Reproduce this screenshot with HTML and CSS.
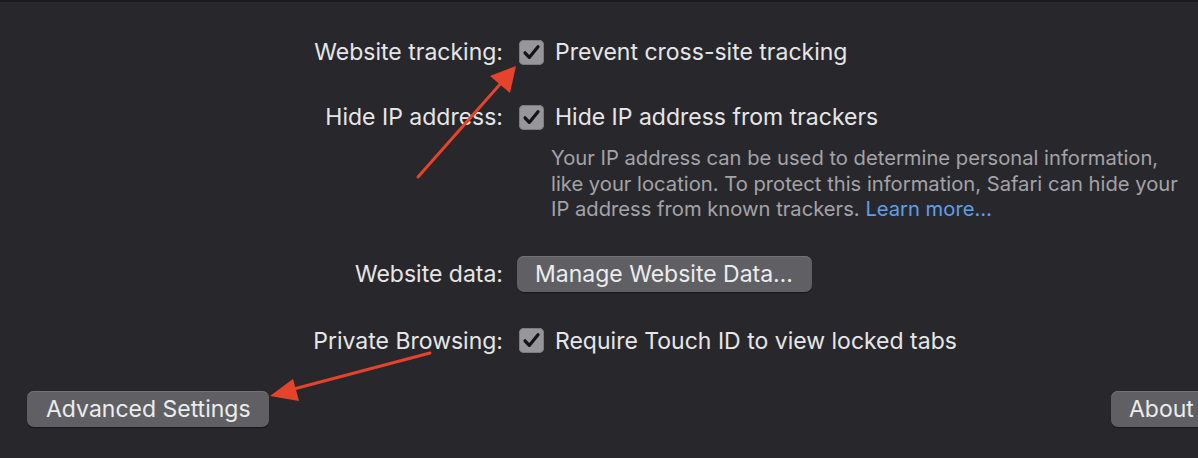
FILE: index.html
```html
<!DOCTYPE html>
<html>
<head>
<meta charset="utf-8">
<link rel="stylesheet" href="styles.css">
</head>
<body>
<div class="page">
  <div class="form">
    <div class="label r1">Website tracking:</div>
    <div class="field r1">
      <span class="check"><svg viewBox="0 0 25 25" width="25" height="25"><path d="M6 12.8 L10.3 17.4 L19 6.8" fill="none" stroke="#141416" stroke-width="3.2" stroke-linecap="round" stroke-linejoin="round"/></svg></span>
      <span class="text">Prevent cross-site tracking</span>
    </div>

    <div class="label r2">Hide IP address:</div>
    <div class="field r2">
      <span class="check"><svg viewBox="0 0 25 25" width="25" height="25"><path d="M6 12.8 L10.3 17.4 L19 6.8" fill="none" stroke="#141416" stroke-width="3.2" stroke-linecap="round" stroke-linejoin="round"/></svg></span>
      <span class="text">Hide IP address from trackers</span>
    </div>
    <div class="label"></div>
    <p class="desc">Your IP address can be used to determine personal information, like your location. To protect this information, Safari can hide your IP address from known trackers. <a class="link">Learn more…</a></p>

    <div class="label r3">Website data:</div>
    <div class="field r3">
      <span class="button manage">Manage Website Data…</span>
    </div>

    <div class="label r4">Private Browsing:</div>
    <div class="field r4">
      <span class="check"><svg viewBox="0 0 25 25" width="25" height="25"><path d="M6 12.8 L10.3 17.4 L19 6.8" fill="none" stroke="#141416" stroke-width="3.2" stroke-linecap="round" stroke-linejoin="round"/></svg></span>
      <span class="text">Require Touch ID to view locked tabs</span>
    </div>
  </div>

  <div class="bottom">
    <span class="button advanced">Advanced Settings</span>
    <span class="button about">About</span>
  </div>

  <svg class="arrows" width="1198" height="458" viewBox="0 0 1198 458">
    <line x1="418" y1="177" x2="502" y2="82" stroke="#e5432b" stroke-width="3" stroke-linecap="round"/>
    <polygon points="516,66 510,93 490,76" fill="#e5432b"/>
    <line x1="430" y1="353" x2="290" y2="390" stroke="#e5432b" stroke-width="3" stroke-linecap="round"/>
    <polygon points="270,396 293,379 299,401" fill="#e5432b"/>
  </svg>
</div>
</body>
</html>
```

FILE: styles.css
```css
html, body {
  margin: 0;
  padding: 0;
  background: #28282c;
  overflow: hidden;
}

.page {
  position: relative;
  width: 1198px;
  height: 458px;
  border-top: 2px solid #1a1a1c;
  box-sizing: border-box;
  font-family: Inter, "Noto Sans", sans-serif;
  color: #e6e6e8;
  overflow: hidden;
}

.form {
  display: grid;
  grid-template-columns: 503px 1fr;
  column-gap: 15px;
  padding-top: 35px;
  font-size: 23px;
}

.label {
  text-align: right;
  display: flex;
  align-items: center;
  justify-content: flex-end;
  height: 30px;
}

.field {
  display: flex;
  align-items: center;
  gap: 11px;
  height: 30px;
}

.r2 { margin-top: 35px; }
.r3 { margin-top: 33px; height: 38px; }
.r4 { margin-top: 33px; }

.check {
  width: 25px;
  height: 25px;
  border-radius: 5px;
  background: #97979b;
  box-shadow: inset 0 0 0 1px #7c7c80;
  display: inline-flex;
  align-items: center;
  justify-content: center;
  margin-left: 1px;
}

.desc {
  margin: 13px 0 0 33px;
  width: 635px;
  font-size: 20.2px;
  line-height: 25.5px;
  color: #a3a3a8;
}

.link { color: #5e9fea; }

.button {
  display: inline-flex;
  align-items: center;
  height: 36px;
  box-sizing: border-box;
  background: #606064;
  border-radius: 7px;
  box-shadow: inset 0 1px 0 #737377, 0 1px 1px #18181a;
  color: #ececee;
  font-size: 23px;
  padding: 0 18px;
}

.manage {
  width: 295px;
  margin-left: -1px;
}

.bottom {
  display: flex;
  justify-content: space-between;
  padding-left: 27px;
  margin-top: 35px;
}

.advanced { width: 242px; padding-left: 19px; }

.about {
  width: 110px;
  margin-right: -23px;
}

.arrows {
  position: absolute;
  left: 0;
  top: -2px;
}
```
